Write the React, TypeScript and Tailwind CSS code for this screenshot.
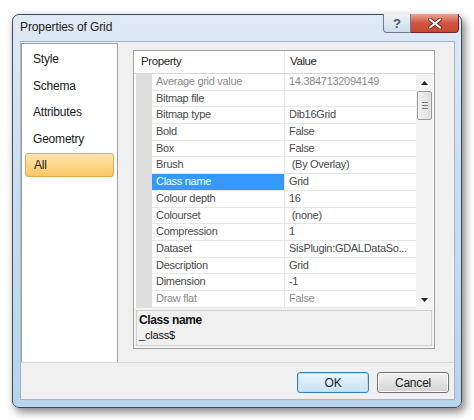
import React from 'react';

// Properties dialog (Win7 Aero look) with a property grid

type Row = { name: string; value: string; dim?: boolean; selected?: boolean };

const rows: Row[] = [
  { name: 'Average grid value', value: '14.3847132094149', dim: true },
  { name: 'Bitmap file', value: '' },
  { name: 'Bitmap type', value: 'Dib16Grid' },
  { name: 'Bold', value: 'False' },
  { name: 'Box', value: 'False' },
  { name: 'Brush', value: '\u00a0(By Overlay)' },
  { name: 'Class name', value: 'Grid', selected: true },
  { name: 'Colour depth', value: '16' },
  { name: 'Colourset', value: '\u00a0(none)' },
  { name: 'Compression', value: '1' },
  { name: 'Dataset', value: 'SisPlugin:GDALDataSo...' },
  { name: 'Description', value: 'Grid' },
  { name: 'Dimension', value: '-1' },
  { name: 'Draw flat', value: 'False', dim: true },
];

const tabs = ['Style', 'Schema', 'Attributes', 'Geometry', 'All'];

function CaptionButtons() {
  return (
    <div className="flex -mt-px -mr-[4px] h-[19px]">
      <div className="w-[28px] h-full flex items-center justify-center rounded-bl-[4px] border border-t-0 border-[#6b7d92] bg-gradient-to-b from-[#eef3f9] to-[#cfdceb] text-[13px] leading-none text-[#4a5868] font-bold">
        ?
      </div>
      <div className="w-[48px] h-full flex items-center justify-center rounded-br-[4px] border border-t-0 border-l-0 border-[#6d2a22] bg-gradient-to-b from-[#e8a392] via-[#d2553f] to-[#c8482f]">
        <svg width="14" height="11" viewBox="0 0 14 11">
          <path d="M2 1.5 L12 9.5 M12 1.5 L2 9.5" stroke="#5a1d15" strokeWidth="3.6" strokeLinecap="round" />
          <path d="M2 1.5 L12 9.5 M12 1.5 L2 9.5" stroke="#ffffff" strokeWidth="2.2" strokeLinecap="round" />
        </svg>
      </div>
    </div>
  );
}

function Scrollbar() {
  return (
    <div className="w-[17px] h-full flex flex-col items-center bg-[#f4f4f4]">
      <div className="h-[17px] w-full flex items-center justify-center">
        <svg width="7" height="4" viewBox="0 0 7 4">
          <path d="M0 4 L3.5 0 L7 4 Z" fill="#222" />
        </svg>
      </div>
      <div className="w-[15px] h-[29px] rounded-[2px] border border-[#9a9a9a] bg-gradient-to-r from-[#f2f2f2] to-[#dedede] flex flex-col items-center justify-center gap-[2px]">
        <div className="w-[6px] h-px bg-[#777]" />
        <div className="w-[6px] h-px bg-[#777]" />
        <div className="w-[6px] h-px bg-[#777]" />
      </div>
      <div className="flex-1" />
      <div className="h-[17px] w-full flex items-center justify-center">
        <svg width="7" height="4" viewBox="0 0 7 4">
          <path d="M0 0 L7 0 L3.5 4 Z" fill="#222" />
        </svg>
      </div>
    </div>
  );
}

function PropertyGrid() {
  return (
    <div className="ml-[15px] mt-[8px] w-[302px] h-[299px] border border-[#a0a0a0] bg-[#f4f4f4] flex flex-col">
      {/* Header */}
      <div className="h-[23px] flex bg-white border-b border-[#d8d8d8] text-[11.5px] tracking-[-0.4px] text-[#1e1e1e]">
        <div className="w-[151px] pl-[7px] flex items-center border-r border-[#ececec]">Property</div>
        <div className="flex-1 pl-[5px] flex items-center">Value</div>
      </div>

      {/* Rows */}
      <div className="h-[234px] flex bg-white pl-[2px]">
        <div className="w-[16px] h-full bg-[#dedede]" />
        <div className="w-[264px] flex flex-col">
          {rows.map((r) => (
            <div key={r.name} className="h-[16.7px] flex text-[11px] tracking-[-0.3px] leading-[15.7px]">
              <div
                className={`w-[133px] pl-[4px] border-b border-r border-[#e6e6e6] ${
                  r.selected ? 'bg-[#3399ff] text-white' : r.dim ? 'text-[#8a8a8a]' : 'text-[#4a4a4a]'
                }`}
              >
                {r.name}
              </div>
              <div
                className={`flex-1 pl-[4px] border-b border-[#e6e6e6] whitespace-nowrap overflow-hidden ${
                  r.dim ? 'text-[#8a8a8a]' : 'text-[#4a4a4a]'
                }`}
              >
                {r.value}
              </div>
            </div>
          ))}
        </div>
        <Scrollbar />
      </div>

      {/* Description */}
      <div className="mt-[2px] mx-[2px] h-[36px] border border-[#cfcfcf] bg-[#f0f0f0] pl-[2px] pt-[2px] text-[#111]">
        <div className="text-[12px] leading-[15px] font-bold tracking-[-0.4px]">Class name</div>
        <div className="text-[11px] leading-[15px] tracking-[-0.2px]">_class$</div>
      </div>
    </div>
  );
}

function Button({ label, isDefault }: { label: string; isDefault?: boolean }) {
  return (
    <button
      className={`w-[72px] h-[21px] rounded-[3px] border text-[12px] tracking-[-0.2px] text-[#1e1e1e] ${
        isDefault
          ? 'border-[#3c7fb1] bg-gradient-to-b from-[#eaf6fd] to-[#c6e2f3] shadow-[inset_0_0_0_1px_#b6e0f7]'
          : 'border-[#707070] bg-gradient-to-b from-[#f2f2f2] to-[#d4d4d4] shadow-[inset_0_0_0_1px_#fcfcfc]'
      }`}
    >
      {label}
    </button>
  );
}

export default function App() {
  return (
    <div
      className="w-[474px] h-[420px] bg-white pt-[14px] pl-[12px] overflow-hidden"
      style={{ fontFamily: '"Segoe UI", "Liberation Sans", Arial, sans-serif' }}
    >
      <div className="w-[450px] h-[394px] rounded-[7px] border border-[#3f4b59] bg-gradient-to-b from-[#dfe9f4] via-[#c6dcf1] to-[#b9d4ee] shadow-[3px_4px_9px_rgba(0,0,0,0.5)] flex flex-col pl-[7px] pr-[6px] pb-[7px]">
        {/* Title bar */}
        <div className="h-[26px] flex justify-between items-start">
          <div className="pt-[4px] text-[12px] leading-[16px] tracking-[-0.1px] text-[#1a1a1a]">Properties of Grid</div>
          <CaptionButtons />
        </div>

        {/* Client area */}
        <div className="flex-1 bg-[#f0f0f0] border border-[#9fb6ce] flex flex-col">
          <div className="h-[320px] flex items-start">
            <div className="mt-[1px] w-[97px] h-[319px] bg-white border border-b-0 border-[#a0a0a0] pt-[3px] px-[3px] flex flex-col gap-[2.5px]">
              {tabs.map((t) => (
                <div
                  key={t}
                  className={`h-[24px] pl-[8px] flex items-center text-[12px] tracking-[-0.2px] text-[#1a1a1a] rounded-[3px] ${
                    t === 'All'
                      ? 'border border-[#e2ab52] bg-gradient-to-b from-[#fde6ad] to-[#fbc764] pl-[7px]'
                      : ''
                  }`}
                >
                  {t}
                </div>
              ))}
            </div>
            <PropertyGrid />
          </div>

          <div className="flex-1 border-t border-[#d6d6d6] flex justify-end items-start gap-[8px] pt-[9px] pr-[5px]">
            <Button label="OK" isDefault />
            <Button label="Cancel" />
          </div>
        </div>
      </div>
    </div>
  );
}
